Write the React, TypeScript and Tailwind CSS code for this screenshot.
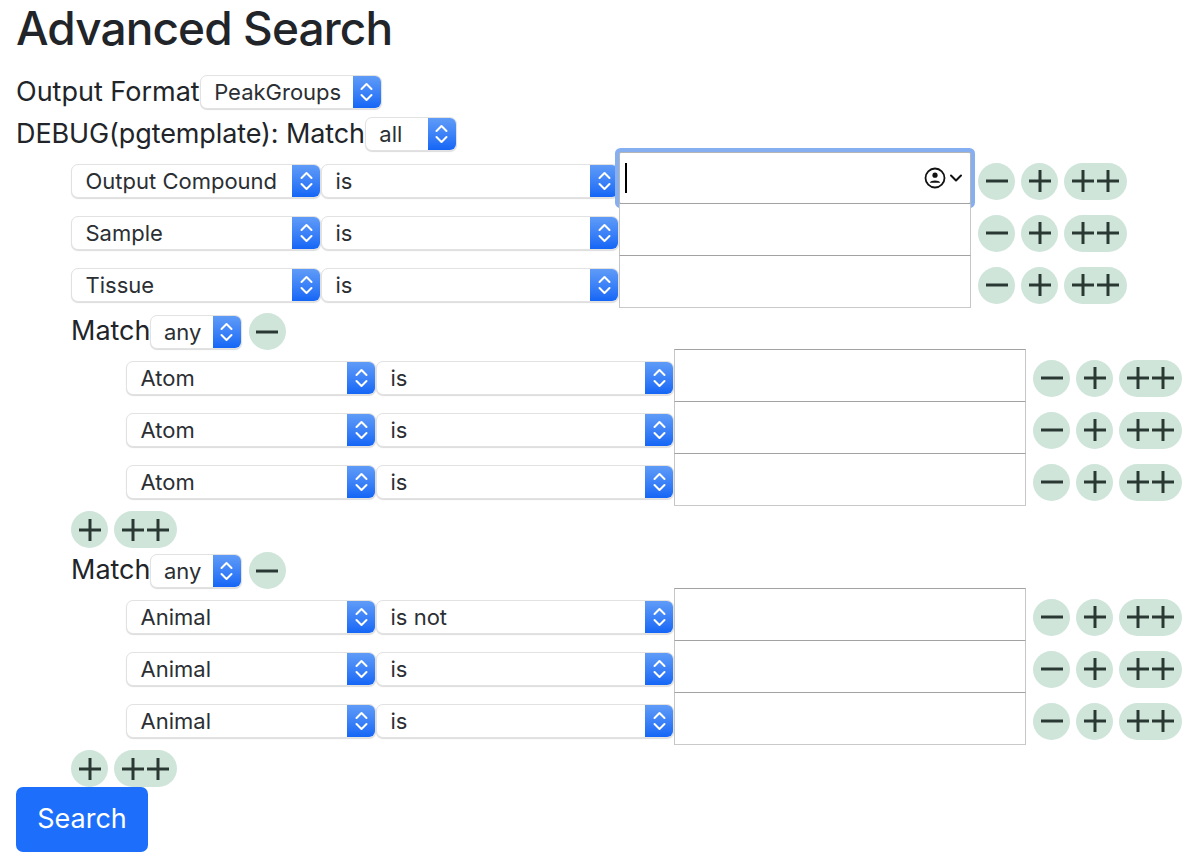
import React from "react";

function Chevrons() {
  return (
    <svg width="15" height="24" viewBox="0 0 15 24" fill="none" stroke="white" strokeWidth="2" strokeLinecap="round" strokeLinejoin="round">
      <path d="M2.5 9 L7.5 4 L12.5 9" />
      <path d="M2.5 15 L7.5 20 L12.5 15" />
    </svg>
  );
}

function Sel({ label, w }: { label: string; w: string }) {
  return (
    <div className={`${w} h-[34px] shrink-0 flex items-stretch rounded-[7px] bg-white border border-[#e2e2e2] shadow-[0_1px_1px_rgba(0,0,0,0.14)] overflow-hidden`}>
      <span className="flex-1 pl-[13.5px] flex items-center text-[22px] leading-none text-[#2b2f33] whitespace-nowrap">{label}</span>
      <span className="w-[28px] shrink-0 flex items-center justify-center bg-gradient-to-b from-[#5f9bf7] to-[#1466f6]">
        <Chevrons />
      </span>
    </div>
  );
}

function Glyph({ kind }: { kind: "minus" | "plus" }) {
  return (
    <svg width="26" height="26" viewBox="0 0 26 26" fill="none" stroke="#2a3833" strokeWidth="3">
      <path d="M2 13 H24" />
      {kind === "plus" && <path d="M13 2 V24" />}
    </svg>
  );
}

function Minus() {
  return <button className="w-[37px] h-[37px] shrink-0 rounded-full bg-[#cfe5da] flex items-center justify-center"><Glyph kind="minus" /></button>;
}
function Plus() {
  return <button className="w-[37px] h-[37px] shrink-0 rounded-full bg-[#cfe5da] flex items-center justify-center"><Glyph kind="plus" /></button>;
}
function PlusPlus() {
  return <button className="w-[63px] h-[37px] shrink-0 rounded-full bg-[#cfe5da] flex items-center justify-center -space-x-[1px]"><Glyph kind="plus" /><Glyph kind="plus" /></button>;
}

function Row({ field, op, focused, nested }: { field: string; op: string; focused?: boolean; nested?: boolean }) {
  const offset = nested ? "mt-[4px]" : "mt-[6px]";
  return (
    <div className="flex items-center h-[52px]">
      <div className={offset}><Sel label={field} w="w-[250px]" /></div>
      <div className={`w-[298px] shrink-0 ${offset}`}><Sel label={op} w="w-[298px]" /></div>
      {focused ? (
        <div className="relative w-[352px] h-[52px] shrink-0 bg-white border border-[#b5b5b5] rounded-[2px] shadow-[0_0_0_4px_#86aff2] flex items-center justify-between pl-[5px] pr-[7px]">
          <span className="w-[2px] h-[30px] bg-black" />
          <span className="flex items-center gap-[3px]">
            <svg width="22" height="22" viewBox="0 0 22 22" fill="none" stroke="#111" strokeWidth="1.8">
              <circle cx="11" cy="11" r="9.5" />
              <circle cx="11" cy="8.2" r="2.6" fill="#111" stroke="none" />
              <path d="M5.8 15.8 C6.5 12.6 15.5 12.6 16.2 15.8 Z" fill="#111" stroke="none" />
            </svg>
            <svg width="14" height="10" viewBox="0 0 14 10" fill="none" stroke="#111" strokeWidth="2" strokeLinecap="round" strokeLinejoin="round">
              <path d="M2 2.5 L7 7.5 L12 2.5" />
            </svg>
          </span>
        </div>
      ) : (
        <div className="relative z-10 w-[352px] h-[53px] -mt-[1px] shrink-0 bg-white border border-[#c6c6c6] border-t-[#a2a2a2] border-b-[#c9c9c9]" />
      )}
      <div className={`flex items-center gap-[6px] ml-[7px] ${offset}`}>
        <Minus />
        <Plus />
        <PlusPlus />
      </div>
    </div>
  );
}

function Adders({ mt }: { mt: string }) {
  return (
    <div className={`flex items-center gap-[6px] h-[37px] ${mt}`}>
      <Plus />
      <PlusPlus />
    </div>
  );
}

function MatchGroup({ field, firstOp, groupMt, adderMt }: { field: string; firstOp: string; groupMt: string; adderMt: string }) {
  return (
    <>
      <div className={`flex items-center h-[37px] ${groupMt} text-[27px] text-[#212529] leading-none`}>
        <span className="pb-[3px]">Match</span>
        <div className="-ml-[1px]"><Sel label="any" w="w-[92px]" /></div>
        <div className="ml-[7px]"><Minus /></div>
      </div>
      <div className="ml-[55px]">
        <Row nested field={field} op={firstOp} />
        <Row nested field={field} op="is" />
        <Row nested field={field} op="is" />
      </div>
      <Adders mt={adderMt} />
    </>
  );
}

export default function App() {
  return (
    <div className="pl-[16px] w-[1200px] h-[863px] overflow-hidden bg-white font-['Inter','Liberation_Sans',sans-serif] text-[#212529]">
      <h1 className="text-[46px] leading-[56px] font-medium tracking-[-0.9px] text-[#212529]">Advanced Search</h1>
      <div className="flex items-center h-[34px] mt-[19px] text-[27px] leading-none">
        <span className="pb-[2px]">Output Format</span>
        <Sel label="PeakGroups" w="w-[182px]" />
      </div>
      <div className="flex items-center h-[34px] mt-[8px] text-[27px] leading-none">
        <span className="pb-[2px] tracking-[-0.11px]">DEBUG(pgtemplate): Match</span>
        <Sel label="all" w="w-[92px]" />
      </div>
      <div className="ml-[55px] mt-[1px]">
        <Row field="Output Compound" op="is" focused />
        <Row field="Sample" op="is" />
        <Row field="Tissue" op="is" />
        <MatchGroup field="Atom" firstOp="is" groupMt="mt-[5px]" adderMt="mt-[5px]" />
        <MatchGroup field="Animal" firstOp="is not" groupMt="mt-[4px]" adderMt="mt-[5px]" />
      </div>
      <button className="w-[132px] h-[65px] rounded-[7px] bg-[#1d6ffb] text-white text-[27px] flex items-center justify-center">Search</button>
    </div>
  );
}
